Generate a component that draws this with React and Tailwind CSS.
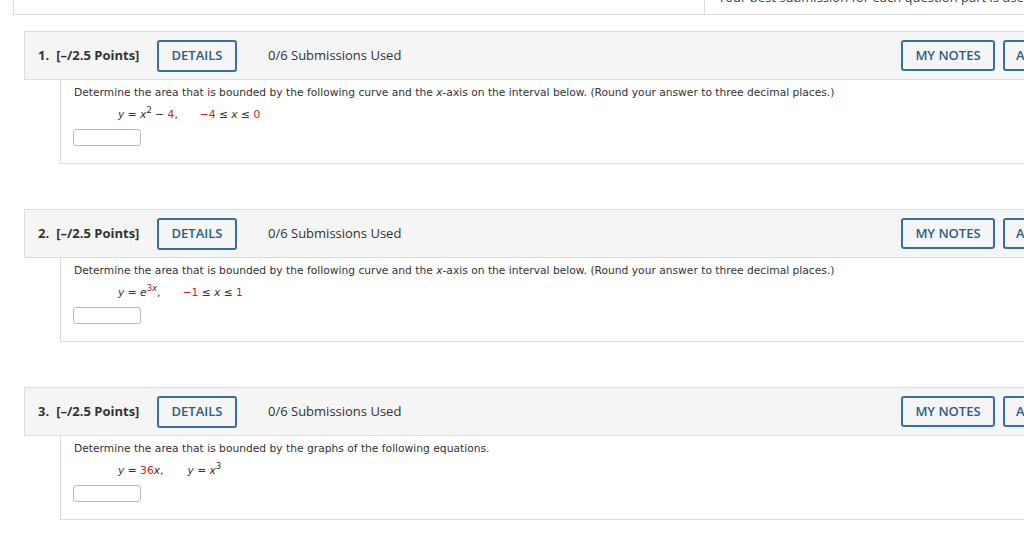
import React from 'react';

const questions = [
    {
        n: 1,
        text: 'Determine the area that is bounded by the following curve and the x-axis on the interval below. (Round your answer to three decimal places.)',
        eq: (
            <>
                <i>y</i> = <i>x</i><sup className="text-[8.5px] relative -top-[5px]">2</sup> − <span className="text-[#cc2222]">4</span>,
                <span className="ml-[22px]"><span className="text-[#cc2222]">−4</span> ≤ <i>x</i> ≤ <span className="text-[#cc2222]">0</span></span>
            </>
        ),
    },
    {
        n: 2,
        text: 'Determine the area that is bounded by the following curve and the x-axis on the interval below. (Round your answer to three decimal places.)',
        eq: (
            <>
                <i>y</i> = <i>e</i><sup className="text-[8.5px] relative -top-[5px]"><span className="text-[#cc2222]">3</span><i>x</i></sup>,
                <span className="ml-[22px]"><span className="text-[#cc2222]">−1</span> ≤ <i>x</i> ≤ <span className="text-[#cc2222]">1</span></span>
            </>
        ),
    },
    {
        n: 3,
        text: 'Determine the area that is bounded by the graphs of the following equations.',
        eq: (
            <>
                <i>y</i> = <span className="text-[#cc2222]">36</span><i>x</i>,
                <span className="ml-[24px]"><i>y</i> = <i>x</i><sup className="text-[8.5px] relative -top-[5px]">3</sup></span>
            </>
        ),
    },
];

function Question({ q }) {
    // "x-axis" in prose uses an italic x
    const parts = q.text.split('x-axis');
    return (
        <div>
            <div className="h-[49px] bg-[#f5f5f5] border border-r-0 border-[#dddddd] flex items-center pl-[13px] font-['Open_Sans',sans-serif] text-[13px] text-[#333333]">
                <div className="w-[119px] font-bold whitespace-nowrap">
                    {q.n}.<span className="ml-[7px]">[–/2.5 Points]</span>
                </div>
                <div className="w-[80px] h-[32px] border-2 border-[#3a6e9f] rounded-[3px] flex items-center justify-center text-[#2b5d8c] font-semibold">
                    DETAILS
                </div>
                <div className="ml-[31px]">0/6 Submissions Used</div>
                <div className="flex-1" />
                <div className="w-[94px] h-[31px] border-2 border-[#3a6e9f] rounded-[3px] flex items-center justify-center text-[#2b5d8c] font-semibold">
                    MY NOTES
                </div>
                <div className="ml-[8px] w-[21px] overflow-hidden">
                    <div className="w-[160px] h-[31px] border-2 border-[#3a6e9f] rounded-[3px] flex items-center pl-[11px] text-[#2b5d8c] font-semibold whitespace-nowrap">
                        ASK YOUR TEACHER
                    </div>
                </div>
            </div>
            <div className="ml-[36px] h-[84px] border-l border-b border-[#dddddd] pl-[13px] pt-[5px] font-['DejaVu_Sans',Verdana,sans-serif] text-[10.7px] text-[#333333]">
                <div className="leading-[16px] whitespace-nowrap">
                    {parts.length > 1 ? (
                        <>
                            {parts[0]}<i>x</i>-axis{parts[1]}
                        </>
                    ) : q.text}
                </div>
                <div className="mt-[6px] ml-[44px] leading-[16px] whitespace-nowrap">{q.eq}</div>
                <div className="mt-[6px] -ml-[1px] w-[68px] h-[17px] border border-[#bbbbbb] rounded-[3px] bg-white" />
            </div>
        </div>
    );
}

export default function App() {
    return (
        <div className="w-[1024px] h-[544px] overflow-hidden bg-white">
            <div className="ml-[13px] h-[15px] border-l border-b border-[#dddddd] flex">
                <div className="w-[690px]" />
                <div className="flex-1 border-l border-[#dddddd] overflow-hidden pl-[13px]">
                    <div className="-mt-[11px] whitespace-nowrap font-['Open_Sans',sans-serif] text-[13px] leading-[16px] text-[#444444]">
                        Your best submission for each question part is used for your score.
                    </div>
                </div>
            </div>
            <div className="ml-[24px] mt-[16px] flex flex-col gap-[45px]">
                {questions.map(q => (
                    <Question key={q.n} q={q} />
                ))}
            </div>
        </div>
    );
}
